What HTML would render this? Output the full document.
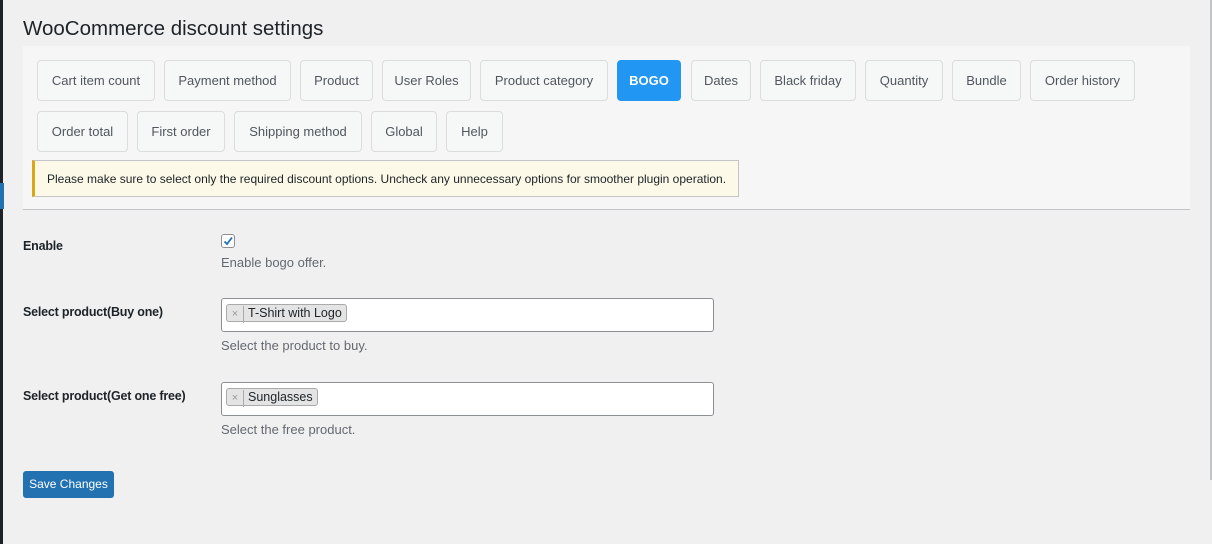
<!DOCTYPE html>
<html><head><style>
body{margin:0;width:1212px;height:544px;background:#f0f0f1;font-family:"Liberation Sans",sans-serif;position:relative;overflow:hidden;color:#1d2327}
.a{position:absolute}
.btn{position:absolute;border:1px solid #dcdcde;border-radius:4px;background:#f6f7f7;font-size:13px;color:#50575e;line-height:40px;text-align:center;box-sizing:border-box;height:41px}
.lbl{position:absolute;left:23px;font-size:12.5px;font-weight:bold;color:#1d2327;letter-spacing:-0.2px}
.desc{position:absolute;left:221px;font-size:13px;color:#646970}
.sel{position:absolute;left:221px;width:493px;height:34px;background:#fff;border:1px solid #8c8f94;border-radius:3px;box-sizing:border-box}
.tag{position:absolute;left:4px;top:5px;height:18px;border:1px solid #aaa;border-radius:3px;background:#e4e4e4;font-size:12.5px;line-height:17px;box-sizing:border-box;padding:0 4px 0 0;color:#1d2327}
.tag span{display:inline-block;width:16px;text-align:center;color:#999;border-right:1px solid #aaa;margin-right:4px;font-size:11px}
</style></head><body>
<div class="a" style="left:0;top:0;width:3px;height:544px;background:#1d2327"></div>
<div class="a" style="left:0;top:183px;width:4px;height:26px;background:#2271b1"></div>
<div class="a" style="left:1210px;top:0;width:2px;height:480px;background:#c3c4c7"></div>
<div class="a" style="left:23px;top:17px;font-size:20.5px;color:#1d2327">WooCommerce discount settings</div>
<div class="a" style="left:23px;top:46px;width:1167px;height:163px;background:#f6f6f6;border-bottom:1px solid #c3c4c7"></div>
<div class="btn" style="left:37px;top:60px;width:118px">Cart item count</div>
<div class="btn" style="left:164px;top:60px;width:127px">Payment method</div>
<div class="btn" style="left:300px;top:60px;width:73px">Product</div>
<div class="btn" style="left:382px;top:60px;width:89px">User Roles</div>
<div class="btn" style="left:480px;top:60px;width:128px">Product category</div>
<div class="btn" style="left:617px;top:60px;width:64px;background:#2196f3;border-color:#2196f3;color:#fff;font-weight:bold">BOGO</div>
<div class="btn" style="left:691px;top:60px;width:60px">Dates</div>
<div class="btn" style="left:760px;top:60px;width:96px">Black friday</div>
<div class="btn" style="left:865px;top:60px;width:78px">Quantity</div>
<div class="btn" style="left:952px;top:60px;width:69px">Bundle</div>
<div class="btn" style="left:1030px;top:60px;width:105px">Order history</div>
<div class="btn" style="left:37px;top:111px;width:91px">Order total</div>
<div class="btn" style="left:137px;top:111px;width:88px">First order</div>
<div class="btn" style="left:234px;top:111px;width:128px">Shipping method</div>
<div class="btn" style="left:371px;top:111px;width:66px">Global</div>
<div class="btn" style="left:446px;top:111px;width:57px">Help</div>
<div class="a" style="left:32px;top:160px;width:707px;height:37px;box-sizing:border-box;background:#fcf9e8;border:1px solid #c3c4c7;border-left:3px solid #dba617;font-size:12px;line-height:36px;padding-left:12px;color:#1d2327">Please make sure to select only the required discount options. Uncheck any unnecessary options for smoother plugin operation.</div>
<div class="lbl" style="top:239px">Enable</div>
<div class="a" style="left:221px;top:234px;width:14px;height:14px;border:1px solid #8c8f94;border-radius:3px;background:#fff;box-sizing:border-box"><svg width="12" height="12" viewBox="0 0 12 12" style="position:absolute;left:0;top:0"><path d="M2.5 6.5 L5 9 L10 2.5" stroke="#2271b1" stroke-width="1.8" fill="none"/></svg></div>
<div class="desc" style="top:255px">Enable bogo offer.</div>
<div class="lbl" style="top:305px">Select product(Buy one)</div>
<div class="sel" style="top:298px"><div class="tag"><span>×</span>T-Shirt with Logo</div></div>
<div class="desc" style="top:338px">Select the product to buy.</div>
<div class="lbl" style="top:389px">Select product(Get one free)</div>
<div class="sel" style="top:382px"><div class="tag"><span>×</span>Sunglasses</div></div>
<div class="desc" style="top:422px">Select the free product.</div>
<div class="a" style="left:23px;top:471px;width:91px;height:27px;background:#2271b1;border-radius:3px;color:#fff;font-size:12px;line-height:27px;text-align:center">Save Changes</div>
</body></html>
